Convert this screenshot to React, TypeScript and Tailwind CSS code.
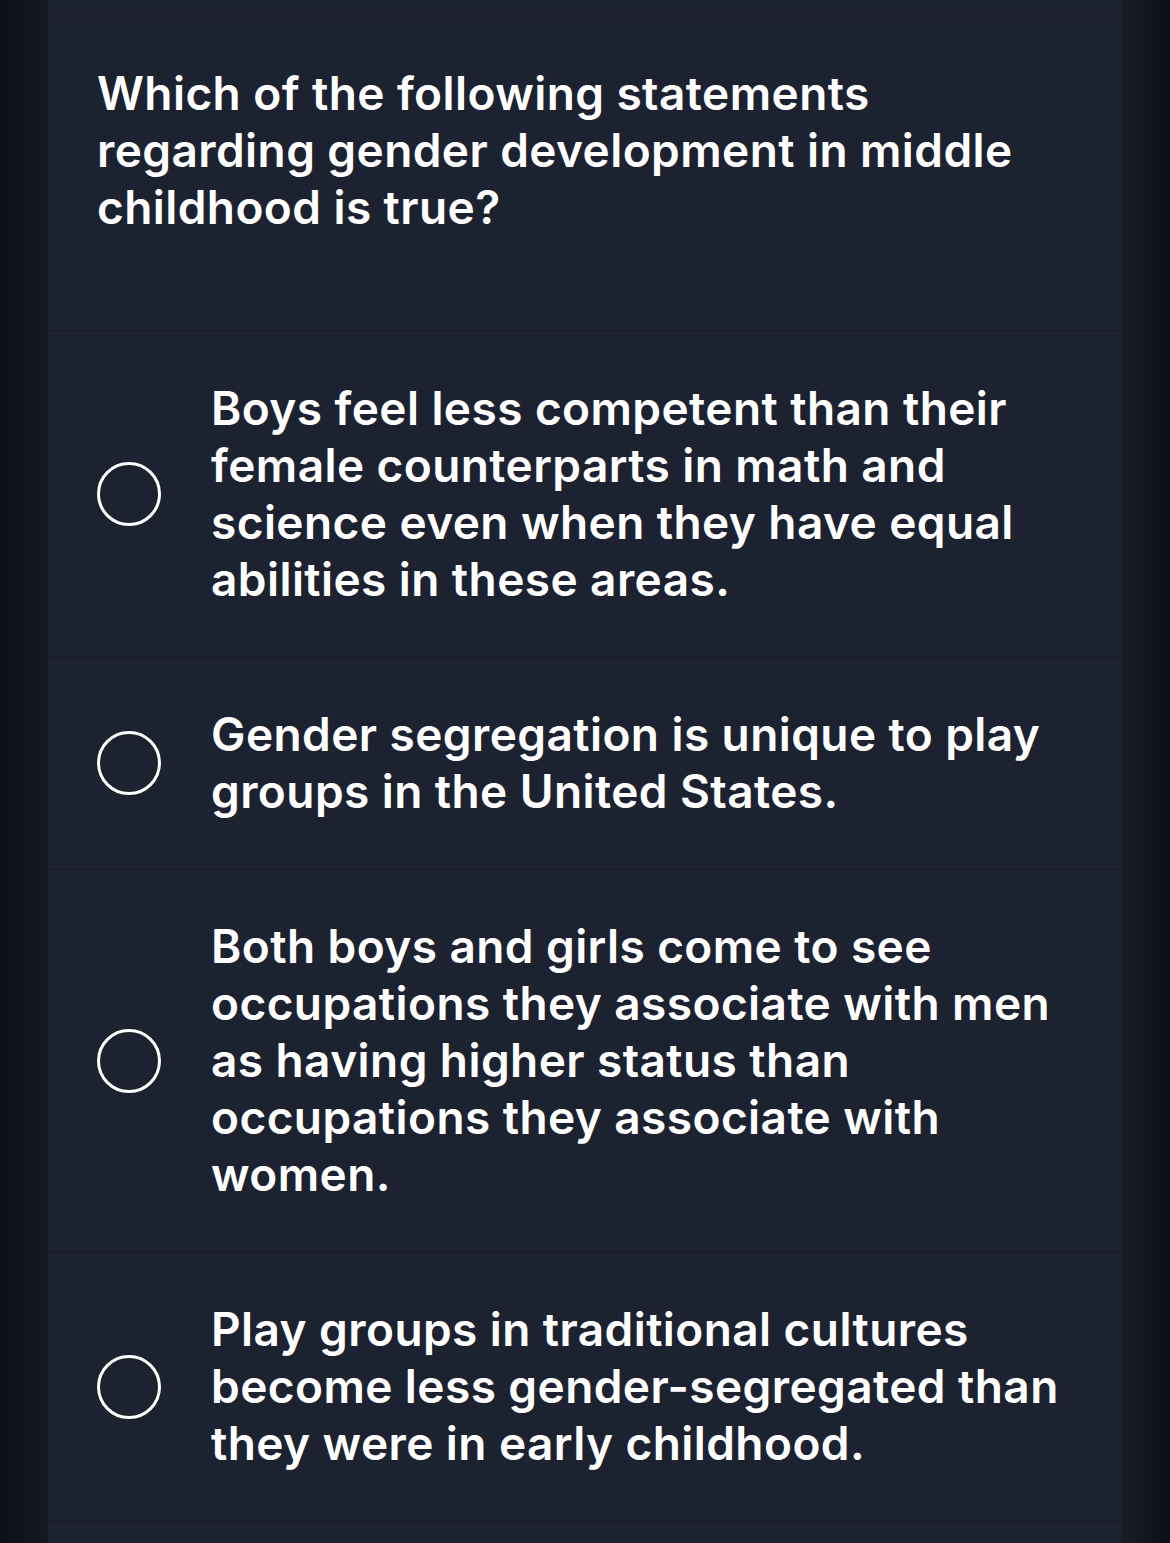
import React from "react";

const options = [
  "Boys feel less competent than their female counterparts in math and science even when they have equal abilities in these areas.",
  "Gender segregation is unique to play groups in the United States.",
  "Both boys and girls come to see occupations they associate with men as having higher status than occupations they associate with women.",
  "Play groups in traditional cultures become less gender-segregated than they were in early childhood.",
];

export default function App() {
  return (
    <div
      className="min-h-[1543px] w-[1170px] bg-[#10141b] flex"
      style={{ fontFamily: "Inter, 'Noto Sans', sans-serif" }}
    >
      <div className="w-[48px] shrink-0 bg-gradient-to-r from-[#0d1016] to-[#151920]" />
      <div className="w-[1074px] shrink-0 bg-[#1d2230] flex flex-col">
        <div className="h-[15px]" />
        <div className="border-t-2 border-[#1a1e29] pt-[48px] pb-[94px] pl-[49px] pr-[48px]">
          <p className="text-white font-semibold text-[46px] leading-[57px] tracking-[0.42px]">
            Which of the following statements regarding gender development in middle childhood is true?
          </p>
        </div>
        {options.map((o, i) => (
          <div
            key={i}
            className="border-t-2 border-[#1a1e29] py-[48px] pl-[49px] pr-[48px] flex items-center"
          >
            <div className="w-[64px] h-[64px] shrink-0 rounded-full border-[3px] border-white" />
            <p className="ml-[50px] text-white font-semibold text-[46px] leading-[57px] tracking-[0.42px]">
              {o}
            </p>
          </div>
        ))}
        <div className="border-t-2 border-[#1a1e29] flex-1" />
      </div>
      <div className="w-[48px] shrink-0 bg-gradient-to-r from-[#181c25] to-[#0d1016]" />
    </div>
  );
}
